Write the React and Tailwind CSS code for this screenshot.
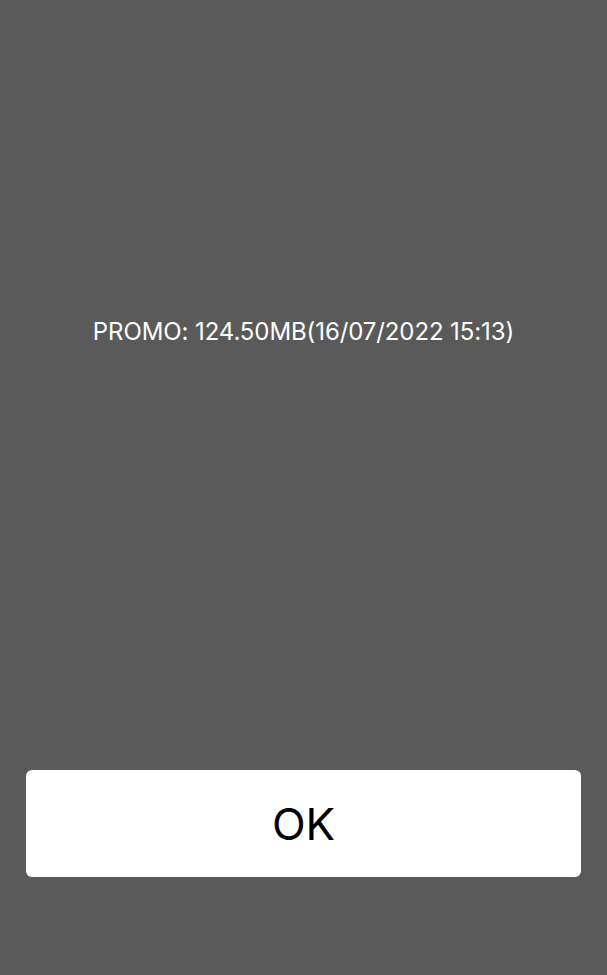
import React from "react";

const App = () => {
  return (
    <div
      className="h-[975px] w-full bg-[#5a5a5a] flex flex-col px-[26px] pb-[98px]"
      style={{ fontFamily: 'Inter, "Liberation Sans", Arial, sans-serif' }}
    >
      <div className="flex-1 flex items-start justify-center pt-[317px]">
        <p className="text-white text-[24px] leading-[30px] tracking-[-0.1px]">
          PROMO: 124.50MB(16/07/2022 15:13)
        </p>
      </div>
      <button className="h-[107px] w-full rounded-[6px] bg-white text-black text-[44px] flex items-center justify-center">
        OK
      </button>
    </div>
  );
};

export default App;
